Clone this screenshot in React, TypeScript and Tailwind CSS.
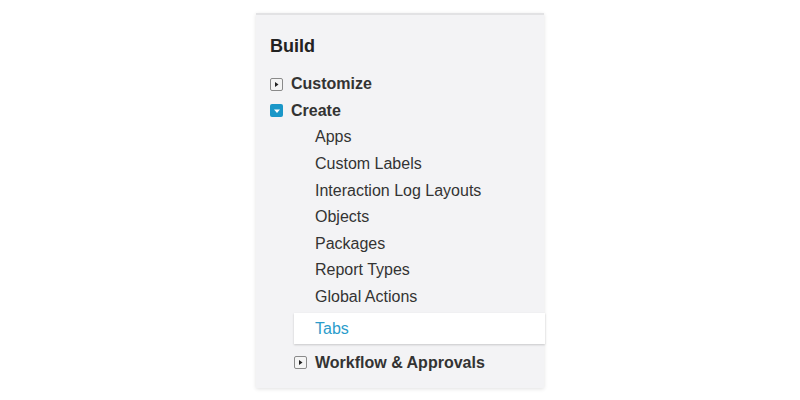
import React from "react";

function Collapsed() {
  return (
    <span className="flex h-[13px] w-[13px] items-center justify-center rounded-[2px] border border-[#8a8a8a] bg-[#f4f4f4]">
      <svg width="7" height="7" viewBox="0 0 7 7">
        <path d="M2 1 L5.5 3.5 L2 6 Z" fill="#222" />
      </svg>
    </span>
  );
}

function Expanded() {
  return (
    <span className="flex h-[13px] w-[13px] items-center justify-center rounded-[2px] bg-[#1a97c8]">
      <svg width="8" height="8" viewBox="0 0 8 8">
        <path d="M1 2.5 L7 2.5 L4 6 Z" fill="#fff" />
      </svg>
    </span>
  );
}

const items = [
  "Apps",
  "Custom Labels",
  "Interaction Log Layouts",
  "Objects",
  "Packages",
  "Report Types",
  "Global Actions",
];

export default function App() {
  return (
    <div
      className="h-[400px] w-[800px] bg-white pt-[13px]"
      style={{ fontFamily: '"Liberation Sans", Arial, sans-serif' }}
    >
      <div className="ml-[256px] w-[288px] border-t-2 border-[#e2e2e4] bg-[#f3f3f5] pb-[12px] pt-[19px] shadow-[0_1px_4px_rgba(0,0,0,0.12)]">
        <div className="pl-[14px] text-[18px] font-bold leading-[24px] text-[#222]">Build</div>
        <div className="mt-[13px]">
          <div className="flex h-[26.6px] items-center gap-[8px] pl-[14px]">
            <Collapsed />
            <span className="text-[16px] font-bold text-[#333]">Customize</span>
          </div>
          <div className="flex h-[26.6px] items-center gap-[8px] pl-[14px]">
            <Expanded />
            <span className="text-[16px] font-bold text-[#333]">Create</span>
          </div>
          <div>
            {items.map((t) => (
              <div key={t} className="flex h-[26.6px] items-center pl-[59px] text-[16px] text-[#333]">
                {t}
              </div>
            ))}
          </div>
          <div className="ml-[38px] mr-[-1px] mt-[3px] flex h-[31px] items-center bg-white pl-[21px] text-[16px] text-[#2b9ccb] shadow-[0_1px_2px_rgba(0,0,0,0.18)]">
            Tabs
          </div>
          <div className="mt-[5px] flex h-[26.6px] items-center gap-[8px] pl-[38px]">
            <Collapsed />
            <span className="text-[16px] font-bold text-[#333]">Workflow &amp; Approvals</span>
          </div>
        </div>
      </div>
    </div>
  );
}
